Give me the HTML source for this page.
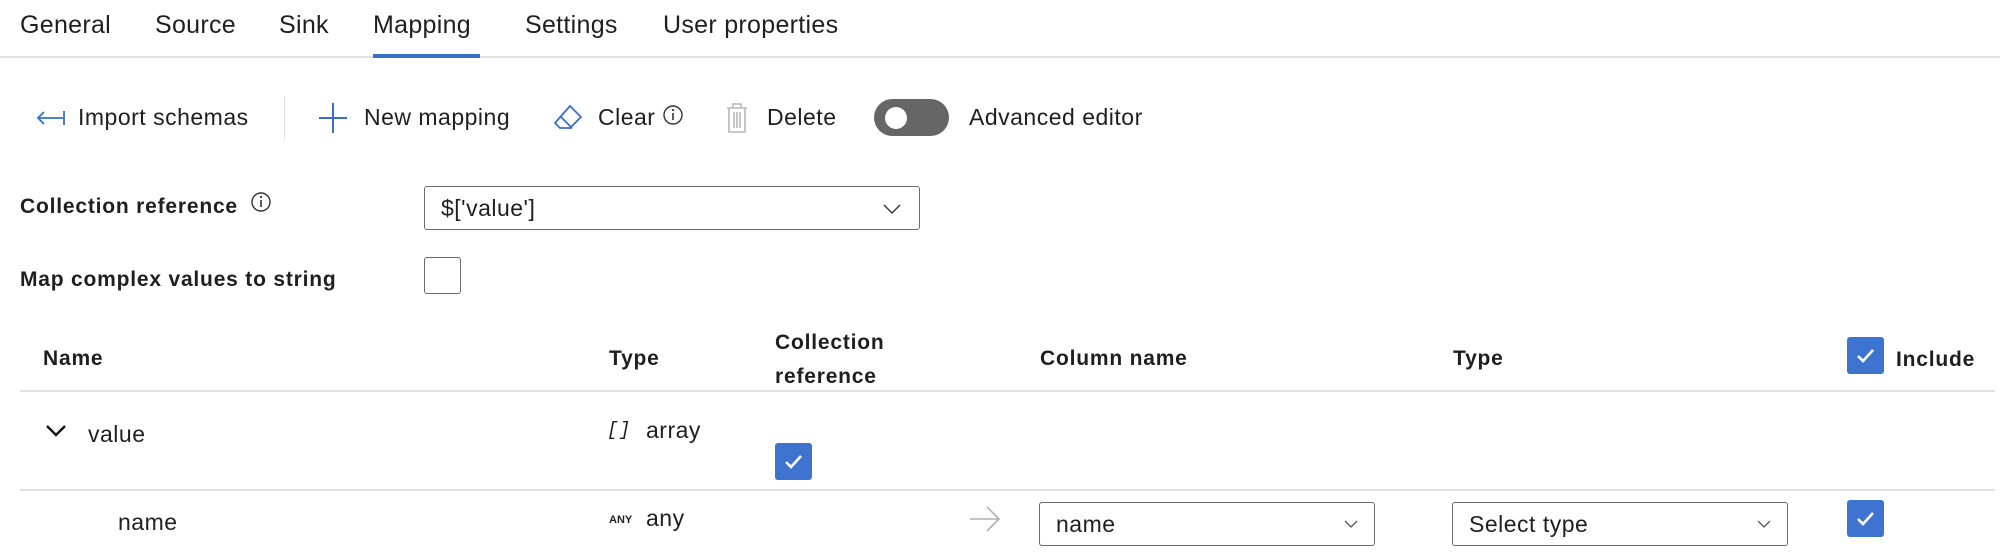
<!DOCTYPE html>
<html><head><meta charset="utf-8"><style>
*{margin:0;padding:0;box-sizing:border-box}
body{width:2000px;height:558px;background:#fff;font-family:"Liberation Sans",sans-serif;color:#1f1f1f;position:relative;overflow:hidden}
.a{position:absolute;white-space:nowrap}
.tab{font-size:25px;top:11px;letter-spacing:0.3px}
.t{font-size:23px;letter-spacing:0.5px}
.b{font-size:21px;font-weight:bold;letter-spacing:0.8px}
.line{position:absolute;height:2px;background:#e1e1e1}
.cb{position:absolute;width:37px;height:37px;background:#3e74cf;border-radius:3px}
.dd{position:absolute;border:1.5px solid #6b6b6b;border-radius:3px;background:#fff}
</style></head><body>
<div class="a tab" style="left:20px">General</div>
<div class="a tab" style="left:155px">Source</div>
<div class="a tab" style="left:279px">Sink</div>
<div class="a tab" style="left:373px">Mapping</div>
<div class="a tab" style="left:525px">Settings</div>
<div class="a tab" style="left:663px">User properties</div>
<div class="line" style="left:0;top:56px;width:2000px"></div>
<div style="position:absolute;left:373px;top:54px;width:107px;height:4px;background:#3a6fc9"></div>

<svg class="a" style="left:36px;top:108px" width="30" height="20" viewBox="0 0 30 20"><path d="M2 10H27M8 4L2 10L8 16M28 3V17" stroke="#3a6fc9" stroke-width="1.8" fill="none"/></svg>
<div class="a t" style="left:78px;top:104px">Import schemas</div>
<div style="position:absolute;left:284px;top:96px;width:1px;height:43px;background:#e1e1e1"></div>
<svg class="a" style="left:318px;top:102px" width="30" height="32"><path d="M15 1V31M1 16H29" stroke="#3a6fc9" stroke-width="2" fill="none"/></svg>
<div class="a t" style="left:364px;top:104px">New mapping</div>
<svg class="a" style="left:552px;top:103px" width="32" height="30" viewBox="0 0 32 30"><path d="M18 3L29 14L18 25H8L3 20Z M9 14L20 25 M8 25H20" stroke="#3a6fc9" stroke-width="1.8" fill="none" stroke-linejoin="round"/></svg>
<div class="a t" style="left:598px;top:104px">Clear</div>
<svg class="a" style="left:662px;top:104px" width="22" height="22"><circle cx="11" cy="11" r="9" stroke="#333" stroke-width="1.4" fill="none"/><path d="M11 9V16" stroke="#333" stroke-width="1.6"/><circle cx="11" cy="6" r="1.1" fill="#333"/></svg>
<svg class="a" style="left:724px;top:101px" width="26" height="33"><path d="M3 7H23M9 7V3H17V7M5 7V31H21V7M10 11V27M13 11V27M16 11V27" stroke="#b8b8b8" stroke-width="1.6" fill="none"/></svg>
<div class="a t" style="left:767px;top:104px">Delete</div>
<div style="position:absolute;left:874px;top:99px;width:75px;height:37px;border-radius:19px;background:#666"></div>
<div style="position:absolute;left:885px;top:107px;width:22px;height:22px;border-radius:11px;background:#fff"></div>
<div class="a t" style="left:969px;top:104px">Advanced editor</div>

<div class="a b" style="left:20px;top:195px">Collection reference</div>
<svg class="a" style="left:250px;top:191px" width="22" height="22"><circle cx="11" cy="11" r="9" stroke="#333" stroke-width="1.4" fill="none"/><path d="M11 9V16" stroke="#333" stroke-width="1.6"/><circle cx="11" cy="6" r="1.1" fill="#333"/></svg>
<div class="dd" style="left:424px;top:186px;width:496px;height:44px"></div>
<div class="a t" style="left:441px;top:195px">$['value']</div>
<svg class="a" style="left:883px;top:204px" width="18" height="11"><path d="M1 1L9 9L17 1" stroke="#333" stroke-width="1.4" fill="none"/></svg>
<div class="a b" style="left:20px;top:268px">Map complex values to string</div>
<div class="dd" style="left:424px;top:257px;width:37px;height:37px"></div>

<div class="a b" style="left:43px;top:347px">Name</div>
<div class="a b" style="left:609px;top:347px">Type</div>
<div class="a b" style="left:775px;top:331px">Collection</div>
<div class="a b" style="left:775px;top:365px">reference</div>
<div class="a b" style="left:1040px;top:347px">Column name</div>
<div class="a b" style="left:1453px;top:347px">Type</div>
<div class="cb" style="left:1847px;top:337px"></div>
<svg class="a" style="left:1847px;top:337px" width="37" height="37"><path d="M11 19L16 24L26 13" stroke="#fff" stroke-width="2.6" fill="none"/></svg>
<div class="a b" style="left:1896px;top:348px">Include</div>
<div class="line" style="left:20px;top:390px;width:1975px"></div>

<svg class="a" style="left:45px;top:424px" width="22" height="14"><path d="M2 2L11 11L20 2" stroke="#111" stroke-width="2.4" fill="none"/></svg>
<div class="a t" style="left:88px;top:421px">value</div>
<div class="a t" style="left:607px;top:419px;font-style:italic;font-family:'Liberation Mono',monospace;font-size:19px">[]</div>
<div class="a t" style="left:646px;top:417px">array</div>
<div class="cb" style="left:775px;top:443px"></div>
<svg class="a" style="left:775px;top:443px" width="37" height="37"><path d="M11 19L16 24L26 13" stroke="#fff" stroke-width="2.6" fill="none"/></svg>
<div class="line" style="left:20px;top:489px;width:1975px"></div>

<div class="a t" style="left:118px;top:509px">name</div>
<div class="a" style="left:609px;top:514px;font-size:11px;font-weight:bold">ANY</div>
<div class="a t" style="left:646px;top:505px">any</div>
<svg class="a" style="left:968px;top:505px" width="34" height="28"><path d="M2 14H31M19 2L31 14L19 26" stroke="#b0b0b0" stroke-width="1.6" fill="none"/></svg>
<div class="dd" style="left:1039px;top:502px;width:336px;height:44px"></div>
<div class="a t" style="left:1056px;top:511px">name</div>
<svg class="a" style="left:1344px;top:520px" width="14" height="9"><path d="M1 1L7 7L13 1" stroke="#555" stroke-width="1.3" fill="none"/></svg>
<div class="dd" style="left:1452px;top:502px;width:336px;height:44px"></div>
<div class="a t" style="left:1469px;top:511px">Select type</div>
<svg class="a" style="left:1757px;top:520px" width="14" height="9"><path d="M1 1L7 7L13 1" stroke="#555" stroke-width="1.3" fill="none"/></svg>
<div class="cb" style="left:1847px;top:500px"></div>
<svg class="a" style="left:1847px;top:500px" width="37" height="37"><path d="M11 19L16 24L26 13" stroke="#fff" stroke-width="2.6" fill="none"/></svg>
</body></html>
